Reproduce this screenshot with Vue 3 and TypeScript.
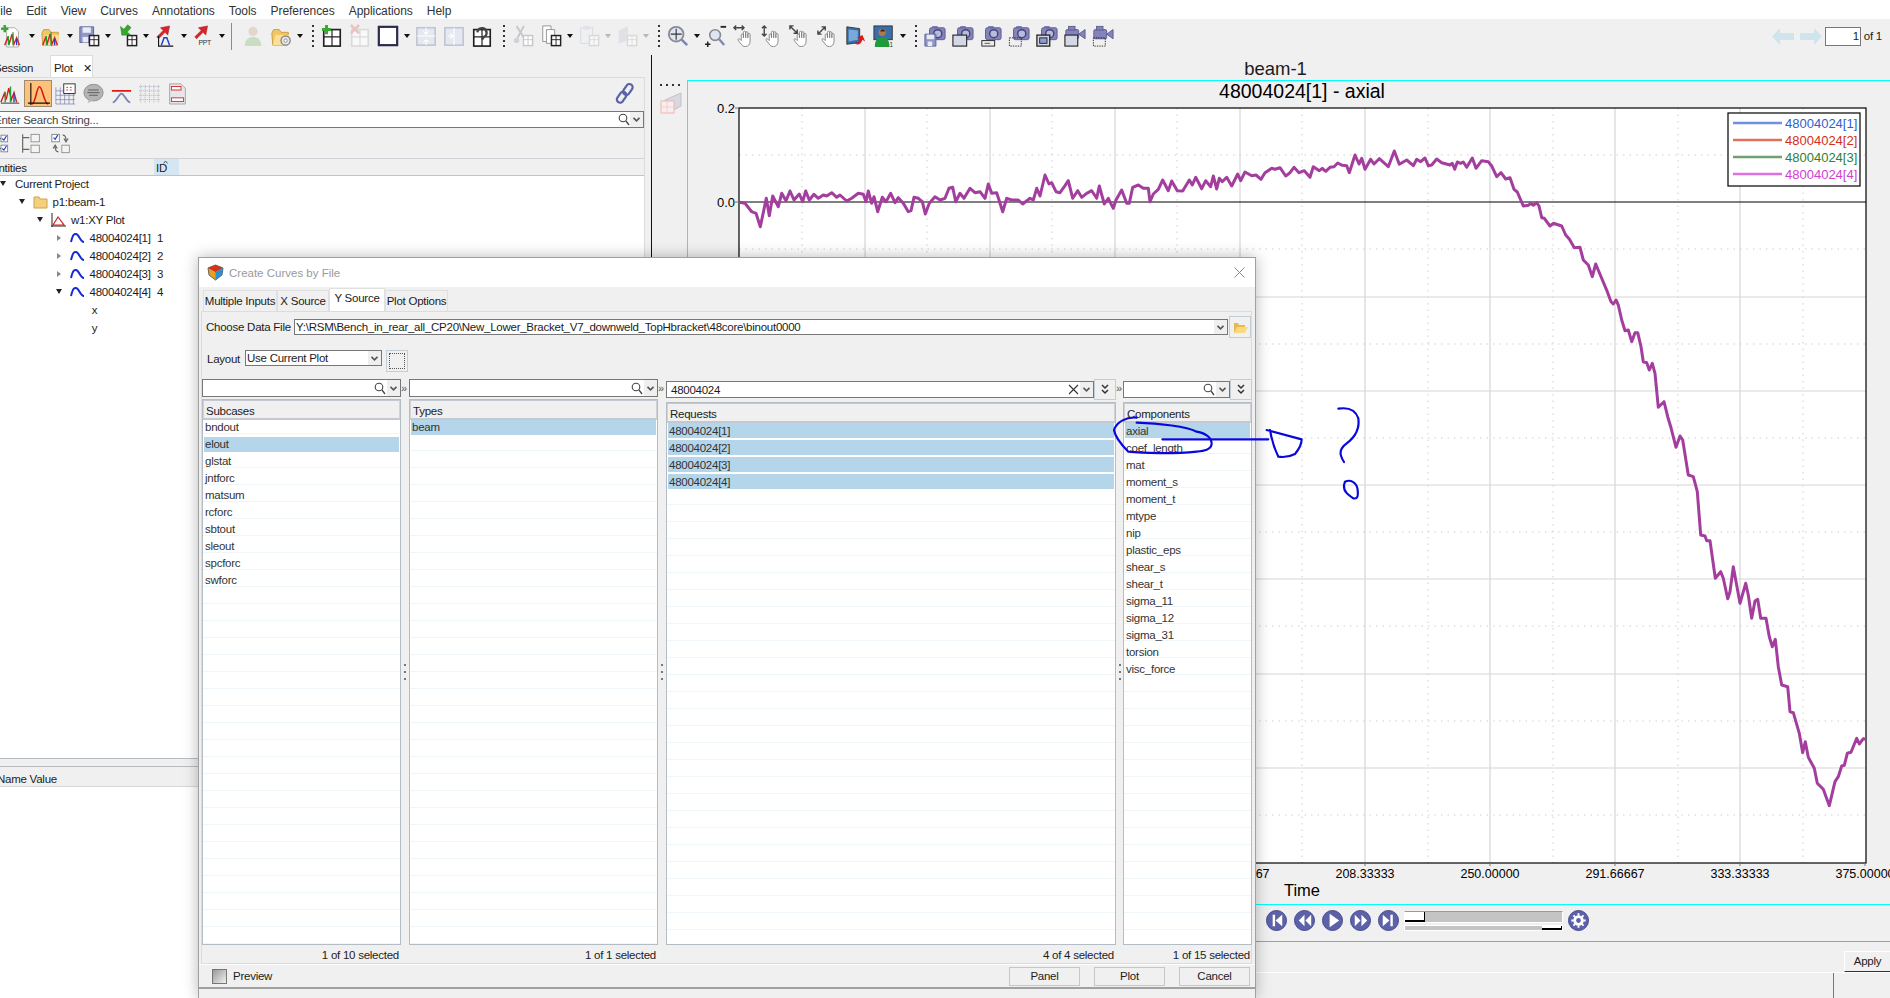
<script setup lang="ts">
type Tool = { icon?: string; caret?: boolean; dim?: boolean; sep?: 'line' | 'dots' }

const menus = ['Edit', 'View', 'Curves', 'Annotations', 'Tools', 'Preferences', 'Applications', 'Help']

const pane = (c = '#222') =>
  `<rect x="12.5" y="11.5" width="10" height="11" fill="#fff" stroke="${c}" stroke-width="1.6"/><path d="M17.5 12v10M13 16h9" stroke="${c}" fill="none"/>`
const bigPane = (c = '#222') =>
  `<rect x="3" y="5" width="18" height="18" fill="#fff" stroke="${c}" stroke-width="1.8"/><path d="M12 5v18M3 13h18" stroke="${c}" stroke-width="1.3" fill="none"/>`
const bars = '<path d="M3 22l3-8 2 6 3-10 2 11 3-7 3 8" fill="none" stroke="#e02020" stroke-width="1.6"/><path d="M7 22V12M12 22V8" stroke="#20a030" stroke-width="1.4"/><path d="M16 22v-7" stroke="#2040c0" stroke-width="1.4"/>'
const folder = '<path d="M2 9l2-4h6l2 3h8l-1 14H3z" fill="#f3c566" stroke="#c79a3a"/><path d="M3 22l3-11h15l-2 11z" fill="#fbdf94"/>'
const greenArrow = '<path d="M14 1v8h6l-9 8-9-8h6V1z" transform="rotate(40 11 9) scale(.8)" fill="#35a82c" stroke="#217a1c" stroke-width=".6"/>'
const redArrow = '<path d="M3 13L10 6 7 3l10-2-2 10-3-3-7 7z" fill="#d8232a" stroke="#a81a20" stroke-width=".6"/>'
const cam = '<path d="M8 3l1.5-2h5L16 3z" fill="#7c7cb4"/><rect x="6" y="3" width="17" height="13" rx="2" fill="#8484ba" stroke="#5a5a90"/><circle cx="15" cy="9.5" r="4.4" fill="#babade" stroke="#45457a" stroke-width="1.6"/>'
const video = '<rect x="2" y="5" width="14" height="10" rx="1.5" fill="#8484ba" stroke="#5a5a90"/><rect x="5" y="1.5" width="7" height="4" fill="#8484ba" stroke="#5a5a90"/><path d="M16 10l7-5v10z" fill="#8484ba" stroke="#5a5a90"/>'
const dashed = '<rect x="1.5" y="14" width="13" height="9" fill="none" stroke="#222" stroke-dasharray="1.5 1.2"/>'
const hand = '<path d="M9 15v-4a1.2 1.2 0 0 1 2.400 0v3-6a1.200 1.200 0 0 1 2.400 0v6-5.500a1.200 1.200 0 0 1 2.400 0V14v-3.500a1.200 1.200 0 0 1 2.400 0V18c0 3-2 5.500-5 5.500-2.500 0-3.500-1-4.500-2.500L5.500 16.500c-.6-1.200 1-2 2-1L9 17z" fill="#fff" stroke="#777" stroke-width=".9"/>'
const dblArrow = (d: string) => `<path d="${d}" fill="none" stroke="#444" stroke-width="1.500"/>`
const glass = (c = '#8a8a96') => `<circle cx="10" cy="10" r="6.500" fill="#dfe6f2" stroke="${c}" stroke-width="2"/><path d="M15 15l6 7" stroke="#7d86b8" stroke-width="2.800"/>`

const icons: Record<string, string> = {
  newplot: `<path d="M5 3h9l4 4v17H5z" fill="#fff" stroke="#a8a8a8"/>${bars}<path d="M3 0v8M-1 4h8" stroke="#38a82e" stroke-width="2.800"/>`,
  openplot: `${folder}${bars}`,
  save: `<path d="M2 2h15v17H2z" fill="#8f96c8" stroke="#5a6096"/><rect x="5" y="2.500" width="9" height="6" fill="#e8eaf4"/><rect x="5" y="13" width="6" height="6" fill="#e8eaf4"/>${pane()}`,
  imp: `${pane()}${greenArrow}`,
  exp: `${redArrow}<path d="M8 22l3-8 3 0 3 8" fill="none" stroke="#2040d0" stroke-width="1.600"/><path d="M5 12v11h16" fill="none" stroke="#111" stroke-width="1.200"/>`,
  ppt: `${redArrow}<text x="7" y="22" font-size="7.500" font-family="Liberation Sans" fill="#333">PPT</text>`,
  person: '<circle cx="12" cy="7" r="5" fill="#d8c4ae"/><path d="M3 23c0-7 4-10 9-10s9 3 9 10z" fill="#a8d0a0"/>',
  foldergear: `${folder}<circle cx="17" cy="17" r="5" fill="#e6e6e6" stroke="#8a8a8a" stroke-width="1.500"/><circle cx="17" cy="17" r="1.800" fill="#fff" stroke="#8a8a8a"/>`,
  winplus: `${bigPane()}<path d="M6 0v10M1 5h10" stroke="#38a82e" stroke-width="3.200"/>`,
  winx: `${bigPane('#c9c9c9')}<path d="M2 0l9 9M11 0L2 9" stroke="#e8a0a0" stroke-width="2.800"/>`,
  winsq: '<rect x="2" y="2" width="20" height="20" fill="#fff" stroke="#2a2a50" stroke-width="2.400"/>',
  winl: '<rect x="2" y="3" width="20" height="19" fill="#e4e8f0" stroke="#c2c6d0" stroke-width="1.800"/><path d="M12 3v7M2 12h20M12 16v6M9 7l3 3 3-3M9 19l3-3 3 3" stroke="#fff" stroke-width="1.200" fill="none"/>',
  winr: '<rect x="2" y="3" width="20" height="19" fill="#e4e8f0" stroke="#c2c6d0" stroke-width="1.800"/><path d="M12 3v19M5 12h5M8 9l3 3-3 3" stroke="#fff" stroke-width="1.200" fill="none"/>',
  winq: `${bigPane()}<path d="M7 8a5 5 0 1 1 7 5l-2 3" fill="none" stroke="#444" stroke-width="2.600"/>`,
  cut: `<path d="M5 1l8 13M13 1L6 14" stroke="#c4c4cc" stroke-width="2"/><circle cx="5" cy="17" r="3" fill="#d2d2d8"/>${pane('#c8c8c8')}`,
  copy: `<path d="M3 1h9v17H3z" fill="#fff" stroke="#8e8e96"/><path d="M7 5h9v15H7z" fill="#fff" stroke="#8e8e96"/>${pane()}`,
  paste: `<rect x="3" y="3" width="13" height="17" fill="#eef0f6" stroke="#c4c8d4"/><rect x="6" y="1" width="7" height="4" fill="#d6d8e0"/>${pane('#c8c8c8')}`,
  pasteb: `<path d="M3 6l10-5v16L3 20z" fill="#d4d6de"/>${pane('#c8c8c8')}`,
  zoomfit: `<circle cx="10" cy="10" r="8" fill="#dfe6f2" stroke="#8a8a96" stroke-width="2"/><path d="M10 4v12M4 10h12" stroke="#333" stroke-width="1.200"/><path d="M16 16l6 6" stroke="#7d86b8" stroke-width="2.800"/>`,
  zoomout: `<g transform="translate(2 2) scale(.9)">${glass()}</g><path d="M17 2h6" stroke="#222" stroke-width="2"/><path d="M3 18v6M0 21h6" stroke="#222" stroke-width="1.600"/>`,
  handh: `${hand}${dblArrow('M1 3h11M3.500 .500L1 3l2.500 2.500M9.500 .500L12 3 9.500 5.500')}`,
  handv: `${hand}${dblArrow('M3.500 1v11M1 3.500L3.500 1 6 3.500M1 9.500L3.500 12 6 9.500')}`,
  handd1: `${hand}${dblArrow('M1 1l8 8M1 5V1h4M5 9h4V5')}`,
  handd2: `${hand}${dblArrow('M1 10L9 2M5 2h4v4M1 6v4h4')}`,
  monitor: '<path d="M2 2l14 2v15L2 21z" fill="#3a6ea8" stroke="#333"/><path d="M4 5l10 1v10L4 18z" fill="#79a9dc"/><path d="M10 20c4 3 8 0 9-4l3 2-3-7-6 3 3 1c-1 3-3 5-6 5z" fill="#e01818"/>',
  personmon: '<rect x="1" y="1" width="20" height="15" fill="#3a6ea8" stroke="#333"/><circle cx="10" cy="8" r="4" fill="#b07a50"/><path d="M8 7c0-3 5-3 5 0z" fill="#402414"/><path d="M2 24c0-8 3-11 8-11s8 3 8 11z" fill="#1f9a3c"/><text x="18" y="24" font-size="7" font-family="Liberation Sans" fill="#333">1</text>',
  cam1: `${cam}<path d="M1 10h12v13H1z" fill="#8f96c8" stroke="#5a6096"/><rect x="3" y="10.500" width="8" height="5" fill="#e8eaf4"/><rect x="4" y="18" width="5" height="5" fill="#e8eaf4"/>`,
  cam2: `${cam}<rect x="1" y="11" width="15" height="12" fill="#d4d8e6" stroke="#222" stroke-width="1.200"/>`,
  cam3: `${cam}<rect x="2" y="17" width="14" height="6" fill="#eaeaea" stroke="#222"/><path d="M5 20h6" stroke="#555"/>`,
  cam4: `${cam}${dashed}`,
  cam5: `${cam}<rect x="1" y="11" width="14" height="12" fill="#d4d8e6" stroke="#222" stroke-width="1.400"/><rect x="4" y="14" width="8" height="6" fill="#8e9ccc" stroke="#222"/>`,
  vid1: `${video}<rect x="1" y="11" width="14" height="12" fill="#d4d8e6" stroke="#222" stroke-width="1.200"/>`,
  vid2: `${video}${dashed}`,
  // panel icons
  chart: '<path d="M1 22l4-10 2 7 3-13 3 13 3-8 3 11" fill="none" stroke="#e01818" stroke-width="1.600"/><path d="M6 22V10M12 22V4" stroke="#20a030" stroke-width="1.600"/><path d="M16 22V12" stroke="#2040c0" stroke-width="1.600"/><path d="M1 23h21" stroke="#222"/>',
  curve: '<path d="M5 23C9 23 10 5 13 5s5 18 9 18" fill="none" stroke="#d01818" stroke-width="1.600"/><path d="M4 1v23M1 22h23" stroke="#111" stroke-width="1.200"/>',
  gridnote: '<path d="M1 5v19M6 5v19M11 5v19M16 5v19M21 5v19M1 9h22M1 14h22M1 19h22M1 24h22" stroke="#7a80b0" stroke-width=".8" fill="none"/><rect x="10" y="1" width="13" height="11" fill="#fff" stroke="#222"/><path d="M13 5h2M17 5h2M13 8h2M17 8h2" stroke="#d02020"/>',
  note: '<ellipse cx="12" cy="11" rx="11" ry="9.500" fill="#b4b4b4" stroke="#888"/><path d="M5 23l3-6 5 2z" fill="#b4b4b4"/><path d="M6 8h12M5 11h14M7 14h10" stroke="#555"/>',
  peak: '<path d="M1 9h22" stroke="#e01818" stroke-width="2"/><path d="M2 22c4 0 7-10 10-10s6 10 10 10" fill="none" stroke="#7a80b0" stroke-width="2"/>',
  grid: '<path d="M2 2v21M7 2v21M12 2v21M17 2v21M22 2v21M0 4h24M0 9h24M0 14h24M0 19h24" stroke="#a0a4c4" stroke-width=".7" stroke-dasharray="1.500 .8" fill="none"/>',
  pagebar: '<path d="M3 1h13l5 5v18H3z" fill="#e6e6ea" stroke="#a0a0a0"/><rect x="5" y="4" width="11" height="4" fill="#fff" stroke="#d02020"/><rect x="5" y="17" width="14" height="4" fill="#fff" stroke="#d02020"/>',
  link: '<g fill="none" stroke="#5a62a8" stroke-width="2.400"><rect x="12" y="1" width="7" height="13" rx="3.500" transform="rotate(35 15 7)"/><rect x="5" y="10" width="7" height="13" rx="3.500" transform="rotate(35 9 16)"/></g>',
  checks: '<rect x="6" y="2" width="8" height="8" fill="#fff" stroke="#777"/><rect x="6" y="14" width="8" height="8" fill="#fff" stroke="#777"/><path d="M7.500 6l2 2 3-5M7.500 18l2 2 3-5" fill="none" stroke="#2040c0" stroke-width="1.400"/><path d="M0 6h6M0 18h6" stroke="#555"/>',
  blanks: '<path d="M2 1v22M2 5h8M2 19h8" stroke="#666" stroke-width="1.400" fill="none"/><rect x="12" y="1" width="10" height="9" fill="#f4f4f4" stroke="#888"/><rect x="12" y="14" width="10" height="9" fill="#f4f4f4" stroke="#888"/>',
  swap: '<rect x="1" y="1" width="9" height="9" fill="#fff" stroke="#777"/><path d="M3 5l2 2 3-5" fill="none" stroke="#2040c0" stroke-width="1.400"/><rect x="13" y="14" width="9" height="9" fill="#f4f4f4" stroke="#888"/><path d="M14 2c4 0 4 3 4 6M15.500 6l2.500 4 2.500-4M9 22c-4 0-4-3-4-6M2.500 18l2.500-4 2.500 4" fill="none" stroke="#666" stroke-width="1.400"/>',
}

const tools: Tool[] = [
  { icon: 'newplot', caret: true }, { icon: 'openplot', caret: true }, { icon: 'save', caret: true },
  { icon: 'imp', caret: true }, { icon: 'exp', caret: true }, { icon: 'ppt', caret: true },
  { sep: 'line' },
  { icon: 'person', dim: true }, { icon: 'foldergear', caret: true },
  { sep: 'dots' },
  { icon: 'winplus' }, { icon: 'winx', dim: true }, { icon: 'winsq', caret: true }, { icon: 'winl' }, { icon: 'winr' }, { icon: 'winq' },
  { sep: 'dots' },
  { icon: 'cut' }, { icon: 'copy', caret: true }, { icon: 'paste', caret: true, dim: true }, { icon: 'pasteb', caret: true, dim: true },
  { sep: 'dots' },
  { icon: 'zoomfit', caret: true }, { icon: 'zoomout' }, { icon: 'handh' }, { icon: 'handv' }, { icon: 'handd1' }, { icon: 'handd2' },
  { icon: 'monitor' }, { icon: 'personmon', caret: true },
  { sep: 'dots' },
  { icon: 'cam1' }, { icon: 'cam2' }, { icon: 'cam3' }, { icon: 'cam4' }, { icon: 'cam5' }, { icon: 'vid1' }, { icon: 'vid2' },
]

const panelIcons = ['gridnote', 'note', 'peak', 'grid', 'pagebar']

type TreeRow = { label: string; depth: number; caret?: 'open' | 'closed'; kind?: string; id?: string }
const tree: TreeRow[] = [
  { label: 'Current Project', depth: 0, caret: 'open' },
  { label: 'p1:beam-1', depth: 1, caret: 'open', kind: 'folder' },
  { label: 'w1:XY Plot', depth: 2, caret: 'open', kind: 'plot' },
  { label: '48004024[1]', depth: 3, caret: 'closed', kind: 'curve', id: '1' },
  { label: '48004024[2]', depth: 3, caret: 'closed', kind: 'curve', id: '2' },
  { label: '48004024[3]', depth: 3, caret: 'closed', kind: 'curve', id: '3' },
  { label: '48004024[4]', depth: 3, caret: 'open', kind: 'curve', id: '4' },
  { label: 'x', depth: 4.15 },
  { label: 'y', depth: 4.15 },
]

const subcases = ['bndout', 'elout', 'glstat', 'jntforc', 'matsum', 'rcforc', 'sbtout', 'sleout', 'spcforc', 'swforc']
const requests = ['48004024[1]', '48004024[2]', '48004024[3]', '48004024[4]']
const components = ['axial', 'coef_length', 'mat', 'moment_s', 'moment_t', 'mtype', 'nip', 'plastic_eps', 'shear_s', 'shear_t', 'sigma_11', 'sigma_12', 'sigma_31', 'torsion', 'visc_force']
const dialogTabs = [
  { name: 'Multiple Inputs', width: 74 },
  { name: 'X Source', width: 52 },
  { name: 'Y Source', width: 56 },
  { name: 'Plot Options', width: 63 },
]

// plot grid, page coordinates
const solidX = [865, 990, 1115, 1240, 1365, 1490, 1615, 1740]
const dottedX = [802, 927, 1052, 1177, 1302, 1428, 1553, 1678, 1803]
const solidY = [297, 391, 485, 579, 674, 768]
const dottedY = [155, 249, 344, 438, 532, 626, 721, 815]
const xLabels = [
  [1240, '166.66667'], [1365, '208.33333'], [1490, '250.00000'], [1615, '291.66667'], [1740, '333.33333'], [1865, '375.00000'],
] as const
const legend = [
  { name: '48004024[1]', line: '#7090e0', text: '#3060d0', y: 123 },
  { name: '48004024[2]', line: '#e07060', text: '#d03020', y: 140 },
  { name: '48004024[3]', line: '#70a070', text: '#308030', y: 157 },
  { name: '48004024[4]', line: '#e070e0', text: '#d040d0', y: 174 },
]

// curve was read off three crops, each with its own origin
const trace = (ox: number, oy: number, pts: number[]) => {
  const out: string[] = []
  for (let i = 0; i < pts.length; i += 2) out.push(`${(pts[i] / 3 + ox).toFixed(1)},${(pts[i + 1] / 3 + oy).toFixed(1)}`)
  return out
}
const curvePoints = [
  ...trace(650, 60, [268,427,285,430,305,455,318,460,331,500,349,415,358,467,368,408,385,440,395,400,408,422,420,393,432,420,448,402,458,425,467,393,478,420,492,403,505,415,520,405,530,408,545,398,560,412,570,405,590,423,605,415,625,400,640,403,648,425,655,393,665,430,672,410,683,455,697,412,708,425,722,400,735,428,745,413,760,430,775,455,783,452,792,412,805,415,817,425,826,462,838,430,855,410,870,420,885,415,897,385,908,382,917,425,930,400,942,415,960,385,975,398,990,395,1005,415,1015,372,1025,400,1040,398,1058,455,1070,415,1085,420,1105,420,1118,432,1140,415,1150,420,1160,385,1170,408,1185,345,1197,372,1205,368,1218,395,1230,398,1243,380,1255,362,1268,415,1283,392,1295,412,1310,400,1325,392,1340,415,1348,378,1363,432,1375,415,1390,445,1398,420,1415,390,1430,430,1438,430,1448,382,1465,375,1480,385,1495,385]),
  ...trace(1150, 130, [0,215,10,192,25,178,38,150,55,182,65,153,82,182,98,183,118,150,127,165,137,142,155,176,167,152,182,170,190,138,200,177,208,145,217,155,230,142,245,168,263,132,272,152,285,126,305,137,318,135,333,148,345,128,365,115,375,118,390,113,407,138,420,128,432,112,447,128,463,122,480,142,490,110,508,122,517,115,527,124,540,112,552,110,563,99,577,106,590,107,598,128,615,75,627,102,635,85,645,118,662,88,672,102,688,86,715,110,733,63,748,103,770,90,790,107,800,88,812,95,825,84,835,107,845,105,860,87,875,98,900,105,907,100,914,118,922,96,932,100,940,96,950,112,967,84,978,115,995,92,1015,95,1025,108,1040,140,1053,128,1067,147,1080,143,1092,178,1102,186,1120,228,1135,226,1142,220,1150,226,1160,218,1167,228,1175,263,1183,265,1200,288,1210,280,1235,288,1247,315,1258,327,1273,353,1290,352,1300,390,1315,405,1327,440,1337,402,1372,485,1383,515,1390,522,1398,510]),
  ...trace(1500, 200, [355,315,365,360,375,392,385,390,395,425,405,398,413,398,423,440,430,485,440,488,448,510,457,490,465,520,475,622,492,605,503,650,512,680,528,742,540,708,548,720,565,825,580,830,592,875,602,1005,615,1008,620,1022,630,1022]),
  ...trace(1660, 520, [166,175,182,155,190,175,203,236,210,215,220,140,240,250,257,190,265,225,275,295,285,243,293,238,302,295,318,295,328,350,337,380,346,358,355,440,365,495,383,500,390,575,400,578,418,640,428,698,436,665,445,712,463,745,472,790,490,808,508,857,525,785,535,770,545,738,553,736,562,700,573,697,590,655,598,672,610,656,617,658]),
].join(' ')

const playGlyphs = [
  'M7 5h2.500v12H7zM17 5v12l-7-6z',
  'M11 5v12l-6-6zM18 5v12l-6-6z',
  'M8 4v14l10-7z',
  'M5 5v12l6-6zM12 5v12l6-6z',
  'M5 5v12l7-6zM13 5h2.500v12H13z',
]
</script>

<template>
  <div class="app">
    <div class="menubar">
      <span class="file-menu">File</span>
      <span v-for="m in menus" :key="m">{{ m }}</span>
    </div>

    <div class="toolbar">
      <template v-for="(t, i) in tools" :key="i">
        <span v-if="t.sep === 'line'" class="sep-line"></span>
        <span v-else-if="t.sep === 'dots'" class="sep-dots"></span>
        <span v-else class="tool" :class="{ 'has-caret': t.caret }">
          <svg class="tool-icon" :class="{ dim: t.dim }" viewBox="0 0 24 24" v-html="icons[t.icon!]"></svg>
          <i v-if="t.caret" class="caret" :class="{ faint: t.dim }"></i>
        </span>
      </template>
      <div class="pager">
        <svg width="22" height="17" viewBox="0 0 22 17"><path d="M0 8.500L8 0v5h14v7H8v5z" fill="#d0e4ee" /></svg>
        <svg width="22" height="17" viewBox="0 0 22 17"><path d="M22 8.500L14 0v5H0v7h14v5z" fill="#d0e4ee" /></svg>
        <span class="page-box">1</span>
        <span class="page-of">of 1</span>
      </div>
    </div>

    <div class="main">
      <aside class="left">
        <div class="left-tabs">
          <span class="session-tab">Session</span>
          <span class="plot-tab">Plot <b>✕</b></span>
        </div>
        <div class="left-panel">
          <div class="panel-icons">
            <svg class="pi first" viewBox="0 0 24 24" v-html="icons.chart"></svg>
            <span class="pi-active"><svg viewBox="0 0 24 24" v-html="icons.curve"></svg></span>
            <svg v-for="p in panelIcons" :key="p" class="pi" viewBox="0 0 24 24" v-html="icons[p]"></svg>
            <svg class="pi link" viewBox="0 0 24 24" v-html="icons.link"></svg>
          </div>
          <div class="search">
            <span class="search-text">Enter Search String...</span>
            <svg class="mag" width="12" height="13" viewBox="0 0 12 13"><circle cx="5" cy="5" r="3.800" fill="none" stroke="#444" stroke-width="1.100" /><path d="M8 8l3 4" stroke="#444" stroke-width="1.300" /></svg>
            <span class="chev"><svg width="7" height="5" viewBox="0 0 7 5"><path d="M.5.800l3 3 3-3" fill="none" stroke="#555" stroke-width="1.600" /></svg></span>
          </div>
          <div class="check-row">
            <svg class="cr" viewBox="0 0 24 24" v-html="icons.checks"></svg>
            <svg class="cr" viewBox="0 0 24 24" v-html="icons.blanks"></svg>
            <svg class="cr" viewBox="0 0 24 24" v-html="icons.swap"></svg>
          </div>
          <div class="tree-head">
            <span class="th-name">Entities</span>
            <span class="th-id">ID<svg width="5" height="4" viewBox="0 0 5 4"><path d="M.5 3.500l2-2.500 2 2.500" fill="none" stroke="#555" /></svg></span>
          </div>
          <div class="tree">
            <div v-for="r in tree" :key="r.label" class="tree-row">
              <span class="tree-name" :style="{ paddingLeft: r.depth * 18.5 + 'px' }">
                <i class="tw" :class="r.caret"></i>
                <svg v-if="r.kind === 'folder'" width="15" height="14" viewBox="0 0 15 14"><path d="M1 2h5l1 2h7v9H1z" fill="#f5cf7d" stroke="#c9a24c" /></svg>
                <svg v-else-if="r.kind === 'plot'" width="15" height="14" viewBox="0 0 15 14"><path d="M1 0v14M0 13h15" stroke="#222" /><path d="M2 12l5-8 6 8z" fill="none" stroke="#d02020" stroke-width="1.200" /></svg>
                <svg v-else-if="r.kind === 'curve'" width="15" height="12" viewBox="0 0 15 12"><path d="M1 10C3 2 4 2 6 2c3 0 4 8 8 8" fill="none" stroke="#1428d8" stroke-width="2" /></svg>
                <span class="tree-label">{{ r.label }}</span>
              </span>
              <span class="tree-id">{{ r.id }}</span>
            </div>
          </div>
        </div>
        <div class="props">
          <div class="props-head"><span>Name Value</span></div>
        </div>
      </aside>

      <section class="right">
        <div class="side-strip">
          <span class="strip-dots"></span>
          <svg width="22" height="22" viewBox="0 0 22 22">
            <path d="M5 8l16-7v13L8 21z" fill="#d8d8e2" stroke="#c0c0cc" />
            <rect x="1" y="9" width="13" height="12" fill="#f8eeee" stroke="#f2b4ac" />
            <path d="M1 15h13M7 9v12" stroke="#f2d0cc" />
          </svg>
        </div>
        <div class="plot-col">
          <div class="page-title">beam-1</div>
          <div class="plot-frame">
            <svg class="chart" width="1202" height="823" viewBox="688 81 1202 823">
              <text x="1302" y="98" text-anchor="middle" font-size="19.500" class="chart-text">48004024[1] - axial</text>
              <rect x="739" y="108" width="1127" height="755" fill="#fff" />
              <line v-for="x in solidX" :key="'sx' + x" :x1="x" :x2="x" y1="108" y2="863" stroke="#d6d6d6" stroke-width="1.200" />
              <line v-for="x in dottedX" :key="'dx' + x" :x1="x" :x2="x" y1="108" y2="863" stroke="#cfcfcf" stroke-dasharray="1.500 5" />
              <line v-for="y in solidY" :key="'sy' + y" x1="739" x2="1866" :y1="y" :y2="y" stroke="#d6d6d6" stroke-width="1.200" />
              <line v-for="y in dottedY" :key="'dy' + y" x1="739" x2="1866" :y1="y" :y2="y" stroke="#cfcfcf" stroke-dasharray="1.500 5" />
              <line x1="739" x2="1866" y1="202" y2="202" stroke="#000" stroke-width="1.200" />
              <rect x="739" y="108" width="1127" height="755" fill="none" stroke="#000" stroke-width="1.200" />
              <path d="M735 108h4M735 202h4M1365 863v3M1490 863v3M1615 863v3M1740 863v3M1865 863v3" stroke="#777" />
              <polyline :points="curvePoints" fill="none" stroke="#a43e9e" stroke-width="3" stroke-linejoin="round" />
              <text x="735" y="113" text-anchor="end" font-size="13" class="chart-text">0.2</text>
              <text x="735" y="207" text-anchor="end" font-size="13" class="chart-text">0.0</text>
              <text v-for="l in xLabels" :key="l[1]" :x="l[0]" y="878" text-anchor="middle" font-size="12.500" class="chart-text">{{ l[1] }}</text>
              <text x="1302" y="896" text-anchor="middle" font-size="16.500" class="chart-text">Time</text>
              <rect x="1728" y="113" width="132" height="73" fill="#fff" stroke="#000" stroke-width="1.200" />
              <g v-for="l in legend" :key="l.name">
                <line x1="1733" x2="1782" :y1="l.y" :y2="l.y" :stroke="l.line" stroke-width="2.500" />
                <text x="1785" :y="l.y + 4.500" font-size="13" class="chart-text" :fill="l.text">{{ l.name }}</text>
              </g>
            </svg>
          </div>
          <div class="playback">
            <i class="caret"></i>
            <svg v-for="g in playGlyphs" :key="g" class="play-btn" viewBox="0 0 22 22">
              <circle cx="11" cy="11" r="10.500" fill="#5d62a8" stroke="#43478a" />
              <path :d="g" fill="#fff" />
            </svg>
            <div class="sliders">
              <div class="slider-top"><span class="thumb"></span></div>
              <div class="slider-low"><span class="thumb"></span></div>
            </div>
            <svg class="play-btn gear" viewBox="0 0 22 22">
              <circle cx="11" cy="11" r="10.500" fill="#5d62a8" stroke="#43478a" />
              <circle cx="11" cy="11" r="4" fill="none" stroke="#fff" stroke-width="3" />
              <path d="M11 3.500v15M3.500 11h15M5.700 5.700l10.600 10.600M16.300 5.700L5.700 16.300" stroke="#fff" stroke-width="2" stroke-dasharray="2.500 10" />
            </svg>
          </div>
          <div class="apply-row"><span class="apply">Apply</span></div>
          <div class="bottom-row"><span class="bottom-cell"></span></div>
        </div>
      </section>
    </div>

    <div class="dialog">
      <div class="dlg-title">
        <svg width="17" height="17" viewBox="0 0 17 17">
          <path d="M8.500 1L16 4l-1 7-6.500 5L2 11 1 4z" fill="#e8a020" stroke="#666" />
          <path d="M8.500 1L16 4 8.500 8 1 4z" fill="#d83020" />
          <path d="M8.500 8L16 4l-1 7-6.500 5z" fill="#2a90d0" />
        </svg>
        <span>Create Curves by File</span>
        <svg class="dlg-close" width="11" height="11" viewBox="0 0 11 11"><path d="M.5.500l10 10M10.500.500l-10 10" stroke="#888" /></svg>
      </div>
      <div class="dlg-tabs">
        <span v-for="t in dialogTabs" :key="t.name" class="dlg-tab" :class="{ active: t.name === 'Y Source' }" :style="{ width: t.width + 'px' }">{{ t.name }}</span>
      </div>
      <div class="dlg-panel">
        <div class="file-row">
          <span class="file-label">Choose Data File</span>
          <div class="file-input">
            <span>Y:\RSM\Bench_in_rear_all_CP20\New_Lower_Bracket_V7_downweld_TopHbracket\48core\binout0000</span>
            <span class="chev"><svg width="7" height="5" viewBox="0 0 7 5"><path d="M.5.800l3 3 3-3" fill="none" stroke="#555" stroke-width="1.600" /></svg></span>
          </div>
          <span class="square-btn">
            <svg width="15" height="13" viewBox="0 0 15 13"><path d="M1 12V2h4l1 2h6v2" fill="#e9b84e" /><path d="M1 12l3-6h11l-3 6z" fill="#f8d880" /></svg>
          </span>
        </div>
        <div class="layout-row">
          <span class="layout-label">Layout</span>
          <div class="layout-combo"><span>Use Current Plot</span><span class="chev"><svg width="7" height="5" viewBox="0 0 7 5"><path d="M.5.800l3 3 3-3" fill="none" stroke="#555" stroke-width="1.600" /></svg></span></div>
          <span class="layout-btn"><i></i></span>
        </div>
        <div class="columns">
          <div class="col col-sub">
            <div class="filter-row">
              <div class="filter">
                <svg class="mag" width="12" height="13" viewBox="0 0 12 13"><circle cx="5" cy="5" r="3.800" fill="none" stroke="#444" stroke-width="1.100" /><path d="M8 8l3 4" stroke="#444" stroke-width="1.300" /></svg>
                <span class="chev"><svg width="7" height="5" viewBox="0 0 7 5"><path d="M.5.800l3 3 3-3" fill="none" stroke="#555" stroke-width="1.600" /></svg></span>
              </div>
            </div>
            <div class="list">
              <div class="list-head">Subcases</div>
              <div v-for="s in subcases" :key="s" class="list-row" :class="{ sel: s === 'elout' }">{{ s }}</div>
            </div>
            <div class="list-foot">1 of 10 selected</div>
          </div>
          <div class="gutter"><span class="gg">»</span></div>
          <div class="col col-type">
            <div class="filter-row">
              <div class="filter">
                <svg class="mag" width="12" height="13" viewBox="0 0 12 13"><circle cx="5" cy="5" r="3.800" fill="none" stroke="#444" stroke-width="1.100" /><path d="M8 8l3 4" stroke="#444" stroke-width="1.300" /></svg>
                <span class="chev"><svg width="7" height="5" viewBox="0 0 7 5"><path d="M.5.800l3 3 3-3" fill="none" stroke="#555" stroke-width="1.600" /></svg></span>
              </div>
            </div>
            <div class="list">
              <div class="list-head">Types</div>
              <div class="list-row sel">beam</div>
            </div>
            <div class="list-foot">1 of 1 selected</div>
          </div>
          <div class="gutter"><span class="gg">»</span></div>
          <div class="col col-req">
            <div class="filter-row tall">
              <div class="filter">
                <span class="filter-text">48004024</span>
                <svg class="mag" width="11" height="11" viewBox="0 0 11 11"><path d="M1 1l9 9M10 1l-9 9" stroke="#333" stroke-width="1.100" /></svg>
                <span class="chev"><svg width="7" height="5" viewBox="0 0 7 5"><path d="M.5.800l3 3 3-3" fill="none" stroke="#555" stroke-width="1.600" /></svg></span>
              </div>
              <span class="dbl-btn"><svg width="8" height="11" viewBox="0 0 8 11"><path d="M1 1l3 3 3-3M1 6l3 3 3-3" fill="none" stroke="#333" stroke-width="1.500" /></svg></span>
            </div>
            <div class="list">
              <div class="list-head">Requests</div>
              <div v-for="r in requests" :key="r" class="list-row sel">{{ r }}</div>
            </div>
            <div class="list-foot">4 of 4 selected</div>
          </div>
          <div class="gutter narrow"><span class="gg">»</span></div>
          <div class="col col-comp">
            <div class="filter-row tall">
              <div class="filter">
                <svg class="mag" width="12" height="13" viewBox="0 0 12 13"><circle cx="5" cy="5" r="3.800" fill="none" stroke="#444" stroke-width="1.100" /><path d="M8 8l3 4" stroke="#444" stroke-width="1.300" /></svg>
                <span class="chev"><svg width="7" height="5" viewBox="0 0 7 5"><path d="M.5.800l3 3 3-3" fill="none" stroke="#555" stroke-width="1.600" /></svg></span>
              </div>
              <span class="dbl-btn"><svg width="8" height="11" viewBox="0 0 8 11"><path d="M1 1l3 3 3-3M1 6l3 3 3-3" fill="none" stroke="#333" stroke-width="1.500" /></svg></span>
            </div>
            <div class="list">
              <div class="list-head">Components</div>
              <div v-for="c in components" :key="c" class="list-row" :class="{ sel: c === 'axial' }">{{ c }}</div>
            </div>
            <div class="list-foot">1 of 15 selected</div>
          </div>
        </div>
      </div>
      <div class="dlg-foot">
        <span class="preview-box"></span>
        <span class="preview-label">Preview</span>
        <span class="dlg-btn first">Panel</span>
        <span class="dlg-btn">Plot</span>
        <span class="dlg-btn">Cancel</span>
      </div>
    </div>

    <!-- pen marks drawn over the dialog -->
    <svg class="ink" width="400" height="450" viewBox="0 0 1200 1350">
      <g fill="none" stroke="#0808dc" stroke-width="6.500" stroke-linecap="round" stroke-linejoin="round">
        <path d="M410 503C380 500 350 515 342 540C345 560 365 585 385 605C430 610 520 612 590 605C610 603 635 600 635 580C635 565 620 550 590 545C560 530 480 520 410 518" />
        <path d="M487 568H805" />
        <path d="M800 540L905 568C905 585 895 600 885 612C870 620 850 622 835 620C825 600 815 570 810 540" />
        <path d="M1015 476C1040 472 1065 475 1075 505C1080 540 1060 565 1040 580C1020 595 1015 610 1032 636" />
        <path d="M1035 695C1050 688 1070 695 1073 720C1075 740 1072 748 1060 745C1045 735 1030 725 1032 705Z" />
      </g>
    </svg>
  </div>
</template>

<style>
html,
body {
  margin: 0;
  background: #f0f0f0;
}
</style>

<style scoped>
.app {
  position: relative;
  width: 1890px;
  height: 998px;
  overflow: hidden;
  display: flex;
  flex-direction: column;
  background: #f0f0f0;
  color: #1c1c1c;
  font: 11.5px "Liberation Sans", sans-serif;
  letter-spacing: -0.25px;
}

.menubar {
  height: 19px;
  flex: none;
  background: #fff;
  display: flex;
  align-items: center;
  gap: 14px;
  padding-top: 3px;
  box-sizing: border-box;
  color: #333;
  font-size: 12px;
  letter-spacing: -0.05px;
}

.file-menu {
  margin-left: -7px;
}

.toolbar {
  height: 36px;
  flex: none;
  box-sizing: border-box;
  display: flex;
  align-items: center;
  padding: 0 0 2px 2px;
}

.tool {
  display: flex;
  align-items: center;
  width: 22px;
  margin-right: 6px;
  flex: none;
}

.tool.has-caret {
  width: 38px;
  margin-right: 0;
}

.tool-icon {
  width: 22px;
  height: 22px;
  flex: none;
  overflow: visible;
}

.tool-icon.dim {
  opacity: 0.55;
}

.caret {
  width: 0;
  height: 0;
  margin-left: 5px;
  border: 3px solid transparent;
  border-top: 4px solid #111;
  border-bottom: 0;
  flex: none;
}

.caret.faint {
  border-top-color: #b8b8b8;
}

.sep-line {
  width: 1px;
  height: 27px;
  background: #8a8a8a;
  margin: 0 10px 0 1px;
  flex: none;
}

.sep-dots {
  width: 2px;
  height: 22px;
  margin: 0 7px 0 4px;
  flex: none;
  background: repeating-linear-gradient(#333 0 2px, transparent 2px 5px);
}

.pager {
  margin-left: auto;
  display: flex;
  align-items: center;
  gap: 6px;
  padding-right: 8px;
}

.page-box {
  width: 33px;
  height: 17px;
  border: 1px solid #777;
  background: #fff;
  text-align: right;
  line-height: 17px;
  padding-right: 1px;
  margin-left: -3px;
}

.page-of {
  margin-left: -3px;
}

.main {
  flex: 1;
  display: flex;
  min-height: 0;
}

.left {
  width: 652px;
  flex: none;
  box-sizing: border-box;
  border-right: 1px solid #111;
  display: flex;
  flex-direction: column;
  overflow: hidden;
}

.left-tabs {
  height: 22px;
  flex: none;
  display: flex;
  align-items: stretch;
}

.session-tab {
  width: 56px;
  margin-left: -6px;
  flex: none;
  line-height: 26px;
}

.plot-tab {
  width: 43px;
  box-sizing: border-box;
  background: #fff;
  border: 1px solid #dcdcdc;
  border-bottom: 0;
  padding-left: 3px;
  line-height: 24px;
}

.plot-tab b {
  font-weight: 400;
  font-size: 10.5px;
  margin-left: 7px;
}

.left-panel {
  flex: 1;
  margin-right: 6px;
  border-top: 1px solid #dcdcdc;
  border-right: 1px solid #dcdcdc;
  display: flex;
  flex-direction: column;
  min-height: 0;
}

.panel-icons {
  height: 33px;
  flex: none;
  display: flex;
  align-items: center;
  box-sizing: border-box;
  padding-bottom: 3px;
  gap: 7px;
}

.pi {
  width: 21px;
  height: 23px;
  flex: none;
}

.pi.first {
  margin-right: -4px;
}

.pi-active {
  width: 28px;
  height: 27px;
  box-sizing: border-box;
  flex: none;
  background: #ffc078;
  border: 1px solid #a08a70;
  display: flex;
  align-items: center;
  justify-content: center;
  margin-right: -4px;
}

.pi-active svg {
  width: 23px;
  height: 23px;
}

.pi.link {
  margin-left: auto;
  margin-right: 8px;
  width: 22px;
}

.search {
  height: 17px;
  flex: none;
  box-sizing: border-box;
  border: 1px solid #777;
  border-left: 0;
  background: #fff;
  display: flex;
  align-items: center;
}

.search-text {
  margin-left: -6px;
  color: #444;
}

.mag {
  margin-left: auto;
  flex: none;
}

.chev {
  width: 13px;
  flex: none;
  align-self: stretch;
  background: #efefef;
  display: flex;
  align-items: center;
  justify-content: center;
}

.check-row {
  height: 30px;
  flex: none;
  display: flex;
  align-items: center;
  gap: 5px;
  margin-left: -4px;
}

.cr {
  width: 20px;
  height: 21px;
}

.cr:last-child {
  margin-left: 5px;
}

.tree-head {
  height: 18px;
  flex: none;
  box-sizing: border-box;
  border-top: 1px solid #d0d4d8;
  border-bottom: 1px solid #c0c4c8;
  display: flex;
}

.th-name {
  width: 154px;
  text-indent: -9px;
  line-height: 19px;
  flex: none;
  overflow: hidden;
}

.th-id {
  width: 25px;
  box-sizing: border-box;
  background: #d5e6f3;
  padding-left: 2px;
  line-height: 19px;
  position: relative;
}

.th-id svg {
  position: absolute;
  left: 9px;
  top: 1px;
}

.tree {
  flex: 1;
  background: #fff;
}

.tree-row {
  height: 18px;
  box-sizing: border-box;
  padding-bottom: 2px;
  display: grid;
  grid-template-columns: 154px 1fr;
  align-items: center;
}

.tree-name {
  display: flex;
  align-items: center;
  white-space: nowrap;
}

.tree-name svg {
  margin-right: 4px;
  flex: none;
}

.tree-label {
  margin-left: 1px;
}

.tw {
  width: 14px;
  height: 6px;
  flex: none;
  position: relative;
}

.tw::after {
  content: "";
  position: absolute;
  left: 0;
  top: 0;
  border: 3px solid transparent;
}

.tw.open::after {
  border-top: 5px solid #222;
  border-bottom: 0;
}

.tw.closed::after {
  left: 1px;
  border-left: 4px solid #888;
  border-right: 0;
}

.tree-id {
  padding-left: 3px;
}

.props {
  height: 239px;
  flex: none;
  margin-right: 6px;
  display: flex;
  flex-direction: column;
  background: #fff;
  border-top: 1px solid #b8bcc0;
}

.props-head {
  height: 28px;
  flex: none;
  box-sizing: border-box;
  background: #f0f0f0;
  border-bottom: 1px solid #d8d8d8;
  padding-top: 7px;
}

.props-head span {
  display: block;
  border-top: 1px solid #b8bcc0;
  text-indent: -3px;
  line-height: 24px;
}

.right {
  flex: 1;
  display: flex;
  min-width: 0;
}

.side-strip {
  width: 35px;
  flex: none;
  box-sizing: border-box;
  padding: 29px 0 0 8px;
  display: flex;
  flex-direction: column;
  gap: 6px;
}

.strip-dots {
  width: 20px;
  height: 2px;
  background: repeating-linear-gradient(90deg, #333 0 2px, transparent 2px 6px);
}

.plot-col {
  flex: 1;
  display: flex;
  flex-direction: column;
  min-width: 0;
}

.page-title {
  height: 25px;
  flex: none;
  text-align: center;
  padding-right: 26px;
  letter-spacing: 0;
  font: 18.500px/28px "Liberation Sans", sans-serif;
}

.plot-frame {
  height: 825px;
  flex: none;
  box-sizing: border-box;
  border-top: 1px solid #00ffff;
  border-bottom: 1px solid #00ffff;
  border-left: 1px solid #00ffff;
}

.chart {
  display: block;
}

.chart-text {
  font-family: "Liberation Sans", sans-serif;
  letter-spacing: 0;
}

.playback {
  height: 37px;
  flex: none;
  box-sizing: border-box;
  border-bottom: 1px solid #a0a0a0;
  display: flex;
  align-items: center;
  padding: 0 0 5px 563px;
  gap: 7px;
}

.playback .caret {
  margin-left: 0;
  margin-right: 3px;
}

.play-btn {
  width: 21px;
  height: 23px;
  flex: none;
}

.gear {
  margin-left: -2px;
}

.sliders {
  width: 159px;
  flex: none;
  margin-left: -2px;
  display: flex;
  flex-direction: column;
  gap: 2px;
}

.slider-top {
  height: 10px;
  background: #c4c4c4;
  border: 1px solid #fff;
  border-top-color: #999;
}

.slider-low {
  height: 4px;
  background: #c4c4c4;
  border: 1px solid #fff;
  display: flex;
  justify-content: flex-end;
}

.thumb {
  display: block;
  width: 20px;
  height: 100%;
  box-sizing: border-box;
  background: #fff;
  border-bottom: 2px solid #000;
  border-right: 1px solid #000;
}

.apply-row {
  height: 31px;
  flex: none;
  box-sizing: border-box;
  border-bottom: 1px solid #fff;
  display: flex;
  justify-content: flex-end;
  align-items: flex-end;
}

.apply {
  width: 46px;
  height: 21px;
  box-sizing: border-box;
  border-left: 1px solid #fff;
  border-top: 1px solid #fff;
  border-bottom: 1px solid #333;
  text-align: center;
  line-height: 19px;
}

.bottom-row {
  flex: 1;
  display: flex;
  justify-content: flex-end;
}

.bottom-cell {
  width: 56px;
  border-left: 1px solid #777;
}

.dialog {
  position: absolute;
  left: 198px;
  top: 257px;
  width: 1058px;
  height: 741px;
  box-sizing: border-box;
  border: 1px solid #a0a0a0;
  border-bottom: 0;
  background: #f0f0f0;
  box-shadow: 0 0 14px rgba(0, 0, 0, 0.28);
  display: flex;
  flex-direction: column;
}

.dlg-title {
  height: 29px;
  flex: none;
  background: #fff;
  display: flex;
  align-items: center;
  padding-left: 8px;
  gap: 5px;
  color: #9a9a9a;
  font-size: 11.5px;
  letter-spacing: 0;
}

.dlg-close {
  margin-left: auto;
  margin-right: 10px;
}

.dlg-tabs {
  height: 24px;
  flex: none;
  display: flex;
  align-items: flex-end;
  padding-left: 4px;
}

.dlg-tab {
  height: 21px;
  box-sizing: border-box;
  border: 1px solid #e0e0e0;
  border-bottom: 0;
  text-align: center;
  line-height: 20px;
  white-space: nowrap;
}

.dlg-tab.active {
  height: 23px;
  background: #fff;
  line-height: 19px;
}

.dlg-panel {
  height: 653px;
  flex: none;
  margin: 0 3px 0 2px;
  box-sizing: border-box;
  border: 1px solid #dcdcdc;
  display: flex;
  flex-direction: column;
  padding-top: 4px;
}

.file-row {
  height: 22px;
  flex: none;
  display: flex;
  align-items: center;
}

.file-label {
  margin-left: 4px;
  width: 88px;
  flex: none;
}

.file-input {
  width: 934px;
  height: 16px;
  flex: none;
  box-sizing: border-box;
  background: #fff;
  border: 1px solid #777;
  display: flex;
  align-items: center;
  padding-left: 1px;
  justify-content: space-between;
  line-height: 14px;
}

.square-btn {
  width: 22px;
  height: 22px;
  flex: none;
  box-sizing: border-box;
  border: 1px solid #c4ccd4;
  margin-left: 1px;
  display: flex;
  align-items: center;
  justify-content: center;
}

.layout-row {
  height: 22px;
  flex: none;
  margin-top: 12px;
  display: flex;
  align-items: flex-start;
}

.layout-label {
  width: 38px;
  margin-left: 5px;
  line-height: 18px;
  flex: none;
}

.layout-combo {
  width: 137px;
  height: 16px;
  box-sizing: border-box;
  background: #fff;
  border: 1px solid #777;
  display: flex;
  justify-content: space-between;
  padding-left: 1px;
  line-height: 14px;
}

.layout-btn {
  width: 22px;
  height: 22px;
  margin-left: 4px;
  box-sizing: border-box;
  border: 1px solid #c4ccd4;
  display: flex;
  align-items: center;
  justify-content: center;
}

.layout-btn i {
  width: 14px;
  height: 14px;
  border: 1px dotted #555;
}

.columns {
  flex: 1;
  margin-top: 7px;
  display: flex;
  min-height: 0;
}

.col {
  display: flex;
  flex-direction: column;
  flex: none;
  min-width: 0;
}

.col-sub {
  width: 199px;
}

.col-type {
  width: 249px;
}

.col-req {
  width: 450px;
}

.col-comp {
  width: 129px;
}

.gutter {
  width: 8px;
  flex: none;
  position: relative;
  color: #555;
}

.gutter.narrow {
  width: 7px;
}

.gutter::after {
  content: "";
  position: absolute;
  left: 3px;
  top: 285px;
  width: 2px;
  height: 17px;
  background: repeating-linear-gradient(#777 0 2px, transparent 2px 7px);
}

.gg {
  position: absolute;
  top: 2px;
  left: 0;
  font-size: 11px;
  line-height: 14px;
}

.filter-row {
  height: 20px;
  flex: none;
  display: flex;
  align-items: flex-start;
}

.filter-row.tall {
  height: 23px;
}

.filter {
  flex: 1;
  min-width: 0;
  height: 18px;
  box-sizing: border-box;
  background: #fff;
  border: 1px solid #777;
  display: flex;
  align-items: center;
}

.filter-row.tall .filter {
  margin-top: 2px;
  height: 17px;
}

.filter .mag {
  margin-right: 1px;
}

.filter-text {
  padding-left: 4px;
}

.dbl-btn {
  width: 22px;
  height: 21px;
  flex: none;
  box-sizing: border-box;
  border: 1px solid #c4ccd4;
  display: flex;
  align-items: center;
  justify-content: center;
}

.list {
  flex: 1;
  min-height: 0;
  box-sizing: border-box;
  background: #fff repeating-linear-gradient(transparent 0 16px, #eef6f9 16px 17px);
  border: 1px solid #b4bcc4;
  overflow: hidden;
}

.list-head {
  height: 20px;
  box-sizing: border-box;
  background: #f0f0f0;
  border: 1px solid #d0d4d8;
  border-top-color: #c4c8d0;
  border-bottom: 2px solid #c4c8d0;
  padding-left: 2px;
  line-height: 21px;
  color: #222;
}

.list-row {
  height: 17px;
  box-sizing: border-box;
  padding-left: 2px;
  line-height: 15px;
  color: #333;
}

.filter-row.tall + .list .list-row {
  line-height: 16px;
}

.list-row.sel {
  background: #b4d5ea;
  border-bottom: 2px solid #fff;
  margin: 0 1px;
  padding-left: 1px;
}

.list-foot {
  height: 18px;
  flex: none;
  text-align: right;
  padding-right: 2px;
  line-height: 20px;
}

.dlg-foot {
  height: 25px;
  flex: none;
  box-sizing: border-box;
  border-bottom: 2px solid #a0a0a0;
  border-top: 1px solid #fff;
  display: flex;
  align-items: center;
  padding-left: 13px;
}

.preview-box {
  width: 13px;
  height: 13px;
  border: 1px solid #777;
  background: linear-gradient(135deg, #999, #f0f0f0);
}

.preview-label {
  margin-left: 6px;
}

.dlg-btn {
  width: 71px;
  height: 19px;
  box-sizing: border-box;
  border: 1px solid #c0c8d0;
  text-align: center;
  line-height: 17px;
  margin-left: 14px;
}

.dlg-btn.first {
  margin-left: auto;
}

.dlg-btn:last-child {
  margin-right: 5px;
}

.ink {
  position: absolute;
  left: 1000px;
  top: 250px;
  pointer-events: none;
}
</style>
